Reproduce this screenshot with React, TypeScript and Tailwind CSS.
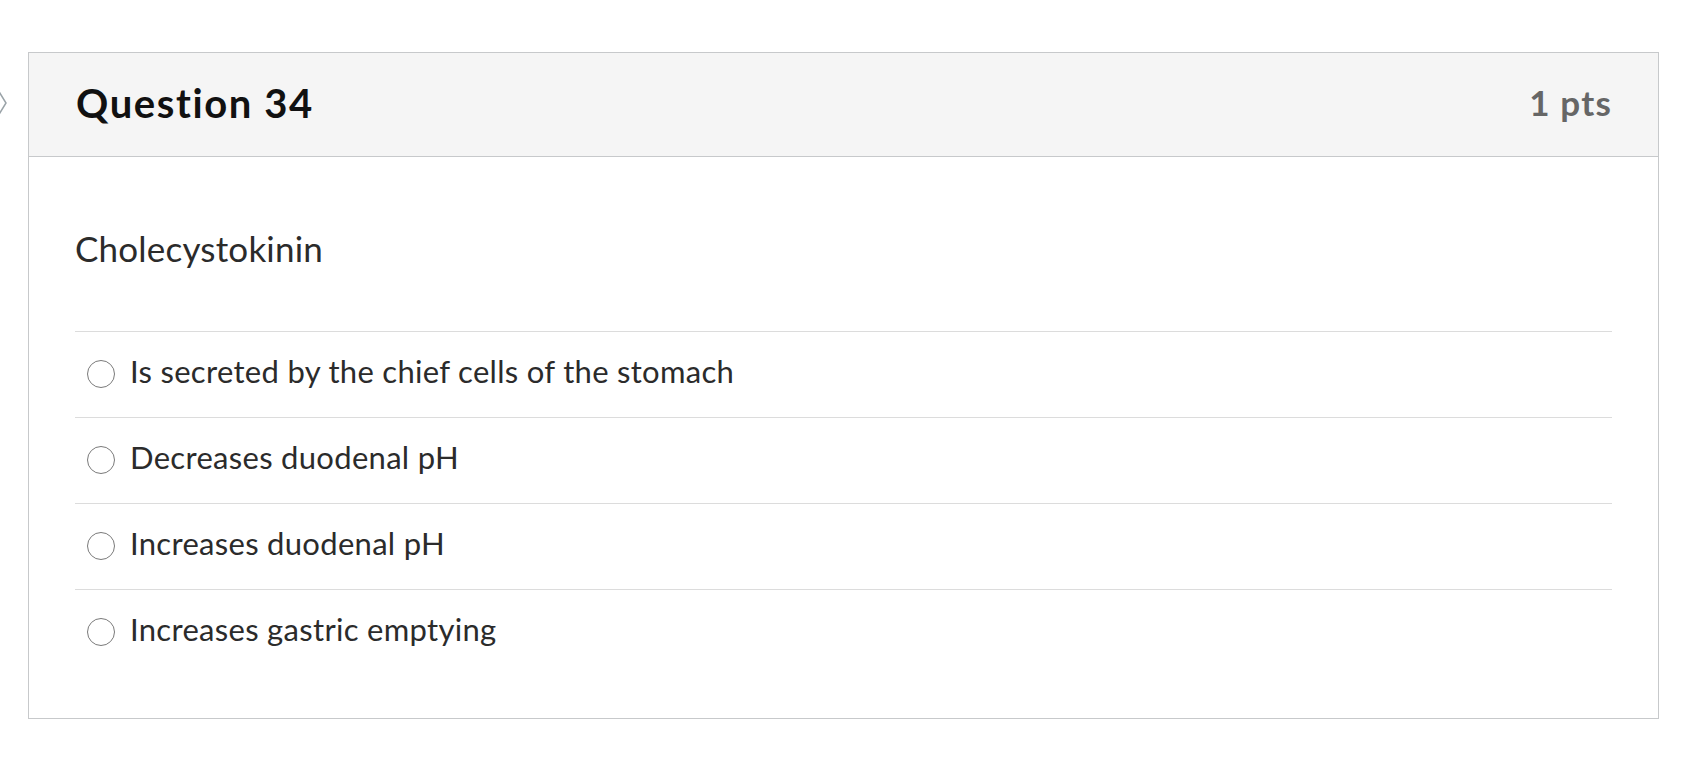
import React from "react";

const options = [
    "Is secreted by the chief cells of the stomach",
    "Decreases duodenal pH",
    "Increases duodenal pH",
    "Increases gastric emptying",
];

export default function App() {
    return (
        <div className="min-h-screen bg-white font-['Lato','Noto_Sans',sans-serif] pt-[52px] flex">
            <div className="w-[28px] shrink-0 pt-[34px]">
                <svg width="10" height="34" viewBox="0 0 10 34" className="-ml-[2px]">
                    <polyline points="0,4 8,17 0,30" fill="none" stroke="#9aa3a8" strokeWidth="1.5" />
                </svg>
            </div>
            <div className="w-[1631px] h-[667px] border border-[#c7c9cb] flex flex-col">
                <div className="h-[104px] bg-[#f5f5f5] border-b border-[#c7c9cb] flex items-center justify-between px-[47px] pb-[4px]">
                    <h2 className="text-[40px] font-bold text-[#111] leading-none tracking-[1.6px]">Question 34</h2>
                    <span className="text-[35px] font-bold text-[#666] leading-none tracking-[1.2px] -mr-[1px]">1 pts</span>
                </div>
                <div className="px-[46px] pt-[67px]">
                    <p className="text-[35px] leading-[48px] text-[#2b2b2b] tracking-[0.2px]">Cholecystokinin</p>
                    <ul className="mt-[59px]">
                        {options.map((opt) => (
                            <li
                                key={opt}
                                className="h-[86px] border-t border-[#dcdcdc] flex items-center pl-[12px] gap-[15px] pb-[6px]"
                            >
                                <span className="w-[28px] h-[28px] rounded-full border-[1.5px] border-[#7a7a7a] bg-white shrink-0 mt-[4px]" />
                                <span className="text-[31px] text-[#2b2b2b] tracking-[0.3px]">{opt}</span>
                            </li>
                        ))}
                    </ul>
                </div>
            </div>
        </div>
    );
}
